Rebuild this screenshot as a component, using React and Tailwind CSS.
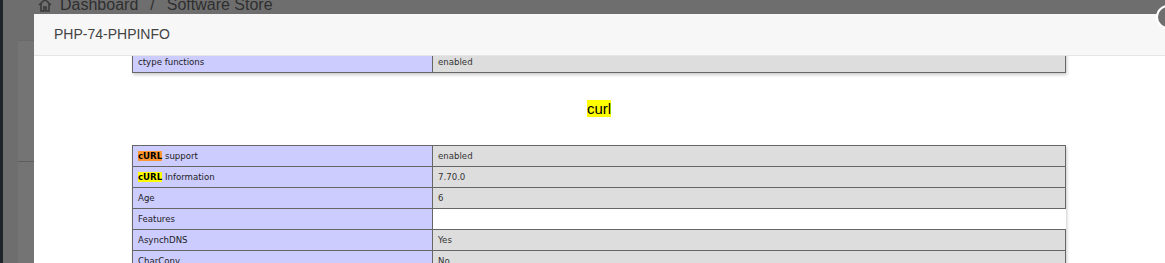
import React from 'react';

const rows = [
  { label: 'support', mark: 'orange', value: 'enabled' },
  { label: 'Information', mark: 'yellow', value: '7.70.0' },
  { label: 'Age', value: '6' },
  { label: 'Features', value: null },
  { label: 'AsynchDNS', value: 'Yes' },
  { label: 'CharConv', value: 'No' },
];

const cellE = 'bg-[#ccccff] border border-[#666] w-[300px] px-[5px] py-1 font-medium text-[#222]';
const cellV = 'bg-[#dddddd] border border-[#666] px-[5px] py-1 text-[#333]';

const Label = ({ row }) => {
  if (!row.mark) return row.label;
  const bg = row.mark === 'orange' ? 'bg-[#ff9632]' : 'bg-[#ffff00]';
  return (
    <>
      <span className={`${bg} font-bold text-black`}>cURL</span> {row.label}
    </>
  );
};

export default function App() {
  return (
    <div className="relative w-[1165px] h-[263px] overflow-hidden bg-[#6e6e6e] font-['Liberation_Sans',Arial,sans-serif]">
      {/* page behind the overlay */}
      <div className="absolute left-0 top-0 h-full w-[3px] bg-[#1f232a]" />
      <div className="absolute left-[18px] top-[40px] h-[250px] w-[16px] bg-[#747474] border-t border-[#6a6a6a]">
        <div className="mt-[120px] border-t border-[#5e5e5e]" />
      </div>
      <div className="absolute left-[38px] top-[-7px] flex items-center gap-2 text-[16px] text-[#2f2f2f]">
        <svg width="14" height="14" viewBox="0 0 14 14" fill="none" stroke="#3a3a3a" strokeWidth="1.6">
          <path d="M1 7 L7 1.5 L13 7 M3 5.5 V13 H6 V9 H8 V13 H11 V5.5" />
        </svg>
        <span>Dashboard</span>
        <span className="px-1">/</span>
        <span>Software Store</span>
      </div>

      {/* modal */}
      <div className="absolute left-[34px] top-[14px] w-[1160px] h-[260px] bg-white flex flex-col">
        <div className="h-[42px] shrink-0 bg-[#f7f7f7] border-b border-[#e5e5e5] flex items-center pl-5 text-[14px] text-[#444]">
          PHP-74-PHPINFO
        </div>
        <div className="flex-1 overflow-hidden font-['DejaVu_Sans',Verdana,sans-serif] text-[8.6px] leading-[12px]">
          <div className="ml-[98px] w-[934px] -mt-[5px]">
            <table className="w-[934px] border-collapse shadow-[1px_2px_3px_#ccc]">
              <tbody>
                <tr>
                  <td className={cellE}>ctype functions</td>
                  <td className={cellV}>enabled</td>
                </tr>
              </tbody>
            </table>
            <div className="h-[72px] flex items-center justify-center">
              <span className="bg-[#ffff00] text-black text-[15px] leading-[17px] font-['Liberation_Sans',Arial,sans-serif] mt-[-1px]">curl</span>
            </div>
            <table className="w-[934px] border-collapse shadow-[1px_2px_3px_#ccc]">
              <tbody>
                {rows.map((row) => (
                  <tr key={row.label}>
                    <td className={cellE}>
                      <Label row={row} />
                    </td>
                    {row.value === null ? (
                      <td className="bg-white px-[5px] py-1">&nbsp;</td>
                    ) : (
                      <td className={cellV}>{row.value}</td>
                    )}
                  </tr>
                ))}
              </tbody>
            </table>
          </div>
        </div>
      </div>

      {/* close button */}
      <div className="absolute left-[1156px] top-[5px] w-[24px] h-[24px] rounded-full border-2 border-white bg-[#6e6e6e]" />
    </div>
  );
}
